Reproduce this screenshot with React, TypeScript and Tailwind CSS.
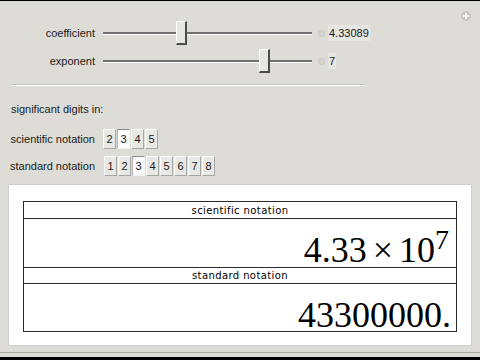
import clsx from 'clsx';

// Mathematica-style demonstration panel: two sliders, two setter bars,
// and a white output pane with a two-row notation table.

const COEFFICIENT = 4.33089;
const EXPONENT = 7;

function Slider({ frac }: { frac: number }) {
  // track is 209px, thumb 11px → 198px of travel
  return (
    <div className="relative h-[24px] w-[209px]">
      <div className="absolute left-0 right-0 top-[11px] h-[3px] border-b border-white bg-[#707070]" />
      <div
        className="absolute top-0 h-[24px] w-[11px] border-l border-t border-b-2 border-r-2 border-l-white border-t-white border-b-[#4a4a4a] border-r-[#4a4a4a] bg-[#e6e6e2]"
        style={{ left: Math.round(frac * 198) }}
      />
    </div>
  );
}

function SliderRow({
  label,
  frac,
  value,
  className,
}: {
  label: string;
  frac: number;
  value: string;
  className?: string;
}) {
  return (
    <div className={clsx('flex items-center', className)}>
      <span className="w-[95px] text-right text-[11px] text-[#1a1a1a]">{label}</span>
      <div className="ml-[8px]">
        <Slider frac={frac} />
      </div>
      <div className="ml-[6px] h-[7px] w-[7px] rounded-full border border-[#c4c4c0] bg-[#d6d6d2]" />
      <span className="ml-[3px] bg-[#e6e6e2] px-[1px] text-[11px] text-[#1a1a1a]">{value}</span>
    </div>
  );
}

function SetterBar({ items, selected }: { items: number[]; selected: number }) {
  return (
    <div className="flex gap-[1px]">
      {items.map((n) => (
        <div
          key={n}
          className={clsx(
            'flex h-[20px] w-[13px] items-center justify-center border text-[11px] text-[#1a1a1a]',
            n === selected
              ? 'border-t-[#8a8a8a] border-l-[#b0b0b0] border-r-[#f4f4f4] border-b-[#f4f4f4] bg-[#fbfbfb]'
              : 'border-t-white border-l-white border-r-[#a6a6a2] border-b-[#a6a6a2] bg-[#e8e8e4]',
          )}
        >
          {n}
        </div>
      ))}
    </div>
  );
}

export default function App() {
  const sig = Number(COEFFICIENT.toPrecision(3));
  const standard = `${Math.round(sig * 10 ** EXPONENT)}.`;

  return (
    <div
      className="relative flex h-[360px] w-[480px] flex-col overflow-hidden border-t border-black bg-[#dddcd7]"
      style={{ fontFamily: '"Liberation Sans", Arial, sans-serif' }}
    >
      {/* add/plus button in the corner */}
      <div className="absolute right-[9px] top-[10px] flex h-[10px] w-[10px] items-center justify-center rounded-full bg-[#c9c9c5]">
        <div className="relative h-[6px] w-[6px]">
          <div className="absolute left-0 top-[2px] h-[2px] w-[6px] bg-[#f2f2f0]" />
          <div className="absolute left-[2px] top-0 h-[6px] w-[2px] bg-[#f2f2f0]" />
        </div>
      </div>

      <SliderRow className="mt-[20px]" label="coefficient" frac={(COEFFICIENT - 1) / 9} value="4.33089" />
      <SliderRow className="mt-[4px]" label="exponent" frac={0.79} value={String(EXPONENT)} />

      <div className="ml-[12px] mt-[11px] h-[2px] w-[353px] border-b border-white bg-[#c2c2be]" />

      <div className="ml-[11px] mt-[17px] text-[11px] leading-[13px] text-[#1a1a1a]">significant digits in:</div>

      <div className="mt-[13px] flex items-center">
        <span className="w-[95px] text-right text-[11px] text-[#1a1a1a]">scientific notation</span>
        <div className="ml-[8px]">
          <SetterBar items={[2, 3, 4, 5]} selected={3} />
        </div>
      </div>

      <div className="mt-[7px] flex items-center">
        <span className="w-[95px] text-right text-[11px] text-[#1a1a1a]">standard notation</span>
        <div className="ml-[9px]">
          <SetterBar items={[1, 2, 3, 4, 5, 6, 7, 8]} selected={3} />
        </div>
      </div>

      {/* output pane */}
      <div className="ml-[8px] mt-[8px] h-[162px] w-[464px] border border-[#cfcfcb] bg-white pl-[14px] pt-[16px]">
        <div className="w-[434px] border border-[#2a2a2a]">
          <div
            className="h-[16px] text-center text-[10px] leading-[17px] tracking-[0.4px] text-black"
            style={{ fontFamily: '"DejaVu Sans", Verdana, sans-serif' }}
          >
            scientific notation
          </div>
          <div
            className="flex h-[49px] justify-end border-t border-[#2a2a2a] pr-[7px] pt-[13px] text-[36px] leading-none text-black"
            style={{ fontFamily: '"Liberation Serif", "Times New Roman", serif' }}
          >
            <span>{sig.toFixed(2)}</span>
            <span className="mx-[6px]">×</span>
            <span>10</span>
            <span className="relative top-[-6px] text-[28px]">{EXPONENT}</span>
          </div>
          <div
            className="h-[16px] border-t border-[#2a2a2a] text-center text-[10px] leading-[16px] tracking-[0.4px] text-black"
            style={{ fontFamily: '"DejaVu Sans", Verdana, sans-serif' }}
          >
            standard notation
          </div>
          <div
            className="flex h-[48px] justify-end border-t border-[#2a2a2a] pr-[5px] pt-[13px] text-[36px] leading-none text-black"
            style={{ fontFamily: '"Liberation Serif", "Times New Roman", serif' }}
          >
            {standard}
          </div>
        </div>
      </div>

      <div className="mt-[6px] h-[1px] w-full bg-[#a9a9a5]" />
      <div className="mt-auto h-[3px] w-full bg-black" />
    </div>
  );
}
